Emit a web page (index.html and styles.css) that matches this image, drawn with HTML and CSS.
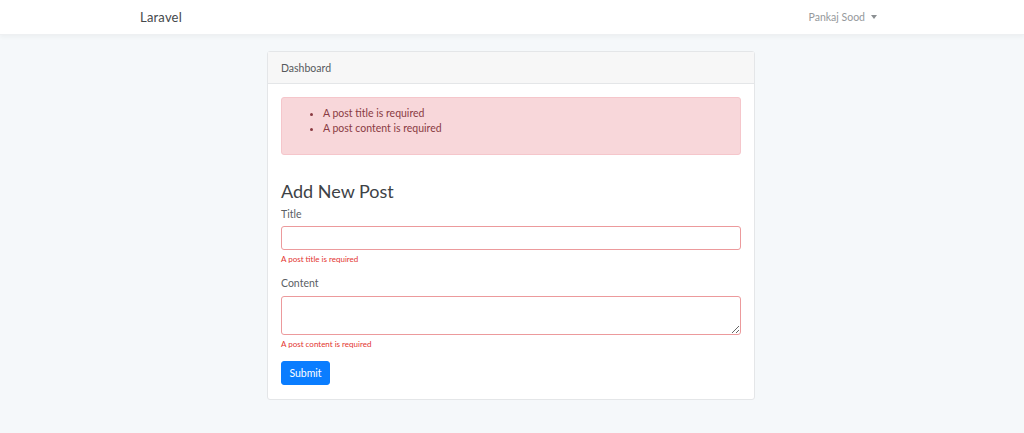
FILE: index.html
```html
<!DOCTYPE html>
<html lang="en">
<head>
<meta charset="utf-8">
<title>Laravel</title>
<link rel="stylesheet" href="styles.css">
</head>
<body>
<nav class="navbar">
  <div class="nav-inner">
    <a class="brand" href="#">Laravel</a>
    <a class="user" href="#">Pankaj Sood <span class="caret"></span></a>
  </div>
</nav>
<main class="main">
  <div class="card">
    <div class="card-header">Dashboard</div>
    <div class="card-body">
      <div class="alert">
        <ul>
          <li>A post title is required</li>
          <li>A post content is required</li>
        </ul>
      </div>
      <h3 class="title">Add New Post</h3>
      <form class="form">
        <div class="group first">
          <label class="label">Title</label>
          <input class="control invalid" type="text">
          <div class="feedback">A post title is required</div>
        </div>
        <div class="group">
          <label class="label second">Content</label>
          <textarea class="control area invalid"></textarea>
          <div class="feedback">A post content is required</div>
        </div>
        <button class="btn" type="button">Submit</button>
      </form>
    </div>
  </div>
</main>
</body>
</html>
```

FILE: styles.css
```css
* { box-sizing: border-box; }
html, body { margin: 0; padding: 0; }
body {
  background: #f5f8fa;
  font-family: Lato, "Open Sans", sans-serif;
  color: #636b6f;
  font-size: 10.5px;
  height: 433px;
  overflow: hidden;
}
.navbar {
  background: #fff;
  height: 35px;
  box-shadow: 0 2px 4px rgba(0,0,0,.04);
  border-bottom: 1px solid #eef0f2;
}
.nav-inner {
  width: 756px;
  margin: 0 auto;
  height: 100%;
  display: flex;
  align-items: center;
  justify-content: space-between;
  padding-left: 6px;
  padding-right: 13px;
}
.brand {
  color: #45494c;
  text-decoration: none;
  font-size: 13px;
  letter-spacing: 0.2px;
}
.user {
  color: #95999c;
  text-decoration: none;
  font-size: 10.5px;
  display: flex;
  align-items: center;
}
.caret {
  display: inline-block;
  margin-left: 6px;
  border-top: 4px solid #8b8f92;
  border-left: 3.5px solid transparent;
  border-right: 3.5px solid transparent;
  width: 0;
  height: 0;
}
.main {
  padding-top: 16px;
  display: flex;
  justify-content: center;
}
.card {
  width: 488px;
  margin-right: 2px;
  background: #fff;
  border: 1px solid #e4e6e8;
  border-radius: 3px;
}
.card-header {
  background: #f7f7f7;
  border-bottom: 1px solid #e4e6e8;
  height: 32px;
  padding: 0 13px;
  display: flex;
  align-items: center;
  color: #56595c;
  font-size: 10.5px;
}
.card-body {
  padding: 13px 13px 14px;
}
.alert {
  background: #f8d7da;
  border: 1px solid #f5c6cb;
  border-radius: 3px;
  color: #8a3b43;
  height: 58px;
  padding: 8px 0 0;
}
.alert ul {
  margin: 0;
  padding-left: 41px;
}
.alert li {
  line-height: 15px;
  font-size: 10.5px;
}
.title {
  margin: 24px 0 0;
  font-weight: 400;
  font-size: 18px;
  color: #3d4246;
  line-height: 24px;
}
.form { margin-top: 4px; }
.group { margin-bottom: 11px; }
.group.first { margin-bottom: 12px; }
.label {
  display: block;
  color: #5a6064;
  font-size: 10.5px;
  line-height: 14px;
  margin-bottom: 5px;
}
.label.second { margin-bottom: 6px; }
.control {
  display: block;
  width: 100%;
  height: 24px;
  border: 1px solid #ec9a9c;
  border-radius: 3px;
  background: #fff;
  font-family: inherit;
  margin: 0;
  outline: none;
}
.area {
  height: 39px;
  resize: vertical;
}
.feedback {
  color: #e3342f;
  font-size: 8px;
  margin-top: 4px;
  line-height: 10px;
}
.btn {
  background: #0a7dff;
  color: #fff;
  border: 1px solid #0a7dff;
  border-radius: 3px;
  font-family: inherit;
  font-size: 10.5px;
  width: 49px;
  height: 24px;
  padding: 0;
  margin-top: 1px;
  cursor: pointer;
}
```
